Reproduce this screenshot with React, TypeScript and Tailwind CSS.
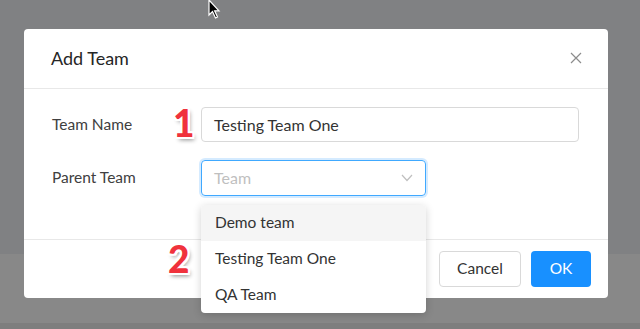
import React from 'react'

function Badge({ n }: { n: string }) {
  return (
    <span
      className="text-[37px] font-black leading-none text-[#f0323c]"
      style={{
        fontFamily: 'Lato, "Noto Sans", sans-serif',
        textShadow:
          '2px 0 0 #fff, -2px 0 0 #fff, 0 2px 0 #fff, 0 -2px 0 #fff, 2px 2px 0 #fff, -2px -2px 0 #fff, 2px -2px 0 #fff, -2px 2px 0 #fff, 2px 3px 4px rgba(0,0,0,0.45)',
      }}
    >
      {n}
    </span>
  )
}

function Cursor() {
  return (
    <svg width="14" height="20" viewBox="0 0 14 20" className="absolute left-[208px] top-0">
      <path d="M1 0 L1 15 L4.5 11.5 L7.5 18 L9.5 17 L6.6 10.8 L11 10.8 Z" fill="#000" stroke="#fff" strokeWidth="1.2" />
    </svg>
  )
}

export default function App() {
  const items = ['Demo team', 'Testing Team One', 'QA Team']
  return (
    <div
      className="relative h-[329px] w-[640px] overflow-hidden text-[#262626]"
      style={{ fontFamily: 'Lato, "Noto Sans", sans-serif' }}
    >
      <div className="flex h-full flex-col">
        <div className="h-[254px] bg-[#808183]" />
        <div className="h-[69px] bg-[#888888]" />
        <div className="flex-1 bg-[#7e7e7e]" />
      </div>

      <Cursor />

      <div className="absolute left-[24px] top-[29px] flex h-[269px] w-[584px] flex-col rounded-[4px] bg-white">
        <div className="flex h-[60px] items-center justify-between border-b border-[#e8e8e8] pl-[27px] pr-[26px]">
          <span className="text-[18px] font-normal text-[#262626]">Add Team</span>
          <svg width="12" height="12" viewBox="0 0 12 12" className="mb-[2px]">
            <path d="M1 1 L11 11 M11 1 L1 11" stroke="#8c8c8c" strokeWidth="1.2" />
          </svg>
        </div>

        <div className="flex flex-1 flex-col gap-[18px] pl-[28px] pr-[29px] pt-[18px]">
          <div className="flex items-center">
            <span className="w-[149px] text-[15.5px] text-[#404040]">Team Name</span>
            <div className="flex h-[35px] flex-1 items-center rounded-[4px] border border-[#d9d9d9] px-[12px] text-[16px] text-[#333]">
              Testing Team One
            </div>
          </div>
          <div className="flex items-center">
            <span className="w-[149px] text-[15.5px] text-[#404040]">Parent Team</span>
            <div className="flex h-[36px] w-[225px] items-center justify-between rounded-[4px] border border-[#40a9ff] px-[12px] text-[16px] text-[#bfbfbf] shadow-[0_0_0_2px_rgba(24,144,255,0.18)]">
              <span>Team</span>
              <svg width="12" height="8" viewBox="0 0 12 8">
                <path d="M1 1 L6 6.5 L11 1" stroke="#bfbfbf" strokeWidth="1.2" fill="none" />
              </svg>
            </div>
          </div>
        </div>

        <div className="flex h-[59px] items-start justify-end gap-[10px] border-t border-[#e8e8e8] pr-[17px] pt-[11px]">
          <button className="h-[36px] w-[82px] rounded-[4px] border border-[#d9d9d9] bg-white text-[15.5px] text-[#333]">
            Cancel
          </button>
          <button className="h-[36px] w-[60px] rounded-[4px] bg-[#1890ff] text-[15.5px] text-white">OK</button>
        </div>
      </div>

      <div className="absolute left-[201px] top-[205px] w-[225px] overflow-hidden rounded-[4px] bg-white shadow-[0_2px_8px_rgba(0,0,0,0.18)]">
        {items.map((t, i) => (
          <div
            key={t}
            className={`flex h-[36px] items-center px-[14px] text-[15.5px] text-[#333] ${i === 0 ? 'bg-[#f5f5f5]' : ''}`}
          >
            {t}
          </div>
        ))}
      </div>

      <div className="absolute left-[173px] top-[104px]">
        <Badge n="1" />
      </div>
      <div className="absolute left-[168px] top-[240px]">
        <Badge n="2" />
      </div>
    </div>
  )
}
